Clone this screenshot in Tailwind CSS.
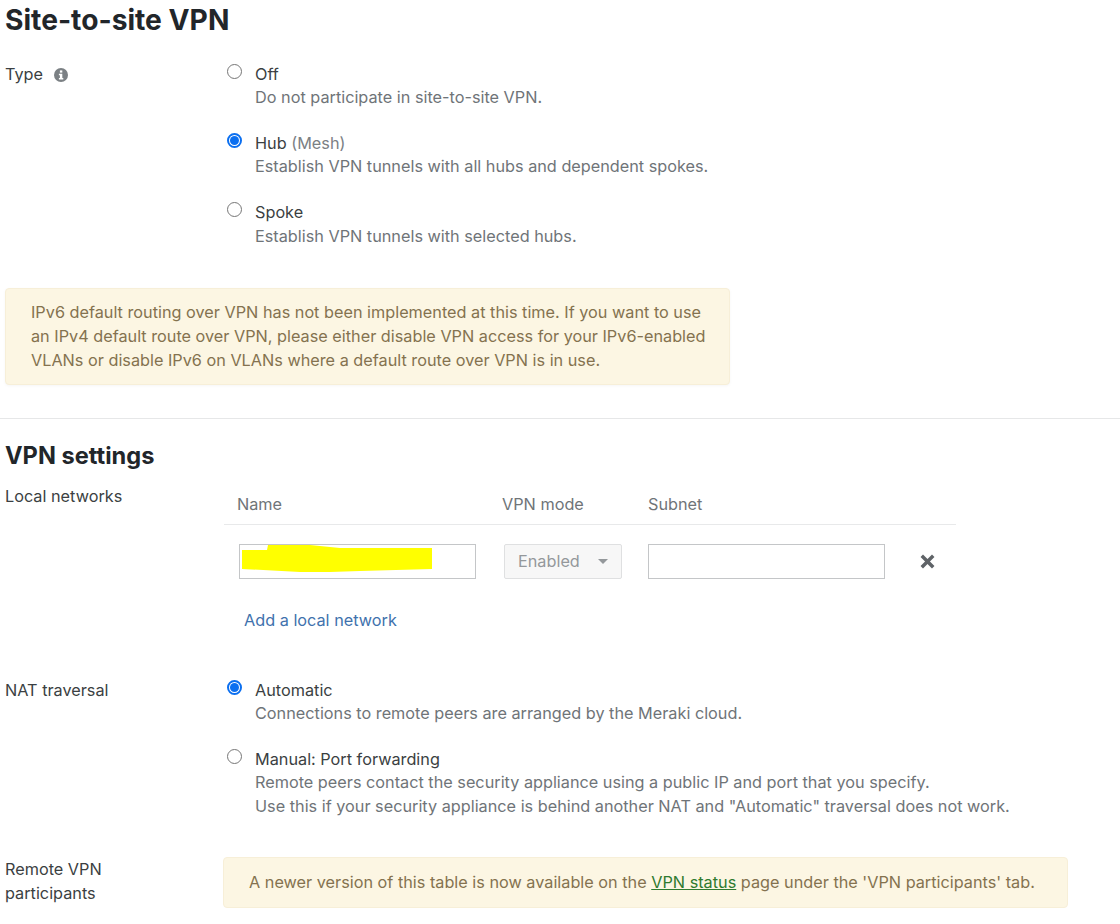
<!DOCTYPE html>
<html lang="en">
  <head>
    <meta charset="UTF-8" />
    <meta name="viewport" content="width=device-width, initial-scale=1.0" />
    <script src="https://cdn.jsdelivr.net/npm/@tailwindcss/browser@4"></script>
    <title>Site-to-site VPN</title>
  </head>

  <body class="bg-white font-['Inter',sans-serif] text-[16.25px] leading-[23px] text-[#3b3f42] overflow-hidden">
    <div class="h-[924px] w-[1120px] overflow-hidden">
      <!-- Type section -->
      <section class="px-[5px] pt-[3px]">
        <h1 class="text-[28.2px] leading-[34px] font-bold text-[#22262a]">Site-to-site VPN</h1>
        <div class="mt-[26px] flex">
          <div class="flex w-[222px] items-center gap-[11px] self-start">
            <span>Type</span>
            <svg class="h-[14px] w-[14px]" viewBox="0 0 14 14"><circle cx="7" cy="7" r="7" fill="#7b8084" /><rect x="5.9" y="2.4" width="2.4" height="2.2" fill="#fff" /><path d="M4.9 5.8h3.4v4.3h1v1.4H4.9v-1.4h1V7.2h-1z" fill="#fff" /></svg>
          </div>
          <div class="flex flex-col gap-[23px]">
            <div class="flex gap-[13px]">
              <span class="mt-[1px] h-[15px] w-[15px] shrink-0 rounded-full border border-[#767676] bg-white"></span>
              <div>
                <div>Off</div>
                <div class="text-[#6f7478]">Do not participate in site-to-site VPN.</div>
              </div>
            </div>
            <div class="flex gap-[13px]">
              <span class="mt-[1px] flex h-[15px] w-[15px] shrink-0 items-center justify-center rounded-full border-2 border-[#0b6ff0] bg-white"><span class="h-[9px] w-[9px] rounded-full bg-[#0b6ff0]"></span></span>
              <div>
                <div>Hub <span class="text-[#7b8084]">(Mesh)</span></div>
                <div class="text-[#6f7478]">Establish VPN tunnels with all hubs and dependent spokes.</div>
              </div>
            </div>
            <div class="flex gap-[13px]">
              <span class="mt-[1px] h-[15px] w-[15px] shrink-0 rounded-full border border-[#767676] bg-white"></span>
              <div>
                <div>Spoke</div>
                <div class="mt-[1px] mb-[-1px] text-[#6f7478]">Establish VPN tunnels with selected hubs.</div>
              </div>
            </div>
          </div>
        </div>
        <div class="mt-[41px] h-[97px] w-[725px] rounded-[4px] border border-[#f7efd8] bg-[#fcf6e3] pt-[11px] pr-[18px] pl-[25px] text-[#84724f] leading-[24px] shadow-[0_1px_3px_rgba(0,0,0,0.04)]">
          IPv6 default routing over VPN has not been implemented at this time. If you want to use an IPv4 default route over VPN, please either disable VPN access for your IPv6-enabled VLANs or disable IPv6 on VLANs where a default route over VPN is in use.
        </div>
      </section>

      <hr class="mt-[33px] border-[#e6e7e8]" />

      <!-- VPN settings section -->
      <section class="px-[5px] pt-[21px]">
        <h2 class="text-[23.6px] leading-[32px] font-bold text-[#22262a]">VPN settings</h2>

        <div class="mt-[13px] flex">
          <div class="w-[219px] shrink-0">Local networks</div>
          <div class="w-[732px]">
            <div class="mt-[8px] flex h-[32px] items-start border-b border-[#e8e9ea] text-[#6f7478]">
              <span class="ml-[13px] w-[265px]">Name</span>
              <span class="w-[146px]">VPN mode</span>
              <span>Subnet</span>
            </div>
            <div class="mt-[19px] flex items-center">
              <div class="relative ml-[15px] h-[35px] w-[237px] border border-[#c4c6c8] bg-white">
                <svg class="absolute top-0 left-0 h-[33px] w-[235px]" viewBox="0 0 235 33"><path d="M2 5 L27 5 L28 0 L70 0 L100 3 L192 3 L192 24 L120 26 L90 27 L60 27 L2 24 Z" fill="#ffff00" /></svg>
              </div>
              <div class="ml-[28px] flex h-[35px] w-[118px] items-center rounded-[2px] border border-[#dfe0e1] bg-[#f7f7f7] pl-[13px] text-[#94989b]">
                Enabled
                <span class="ml-[18px] h-0 w-0 border-x-[5px] border-t-[5px] border-x-transparent border-t-[#94989b]"></span>
              </div>
              <div class="ml-[26px] h-[35px] w-[237px] border border-[#c4c6c8] bg-white"></div>
              <svg class="ml-[35px] h-[15px] w-[15px]" viewBox="0 0 14 14"><path d="M2.8 0.5 7 4.7 11.2 0.5 13.5 2.8 9.3 7 13.5 11.2 11.2 13.5 7 9.3 2.8 13.5 0.5 11.2 4.7 7 0.5 2.8Z" fill="#5f6367" /></svg>
            </div>
            <a class="mt-[30px] ml-[20px] block text-[#3f72ad]">Add a local network</a>
          </div>
        </div>

        <div class="mt-[47px] flex">
          <div class="w-[222px] shrink-0">NAT traversal</div>
          <div class="flex flex-col gap-[23px]">
            <div class="flex gap-[13px]">
              <span class="mt-[1px] flex h-[15px] w-[15px] shrink-0 items-center justify-center rounded-full border-2 border-[#0b6ff0] bg-white"><span class="h-[9px] w-[9px] rounded-full bg-[#0b6ff0]"></span></span>
              <div>
                <div>Automatic</div>
                <div class="text-[#6f7478]">Connections to remote peers are arranged by the Meraki cloud.</div>
              </div>
            </div>
            <div class="flex gap-[13px]">
              <span class="mt-[1px] h-[15px] w-[15px] shrink-0 rounded-full border border-[#767676] bg-white"></span>
              <div>
                <div>Manual: Port forwarding</div>
                <div class="text-[#6f7478]">Remote peers contact the security appliance using a public IP and port that you specify.</div>
                <div class="mt-[1px] mb-[-1px] text-[#6f7478]">Use this if your security appliance is behind another NAT and "Automatic" traversal does not work.</div>
              </div>
            </div>
          </div>
        </div>

        <div class="mt-[40px] flex">
          <div class="w-[218px] shrink-0 leading-[24px]">Remote VPN<br />participants</div>
          <div class="h-[51px] w-[845px] rounded-[4px] border border-[#f7efd8] bg-[#fcf6e3] pl-[25px] pt-[13px] text-[#84724f]">
            A newer version of this table is now available on the <a class="text-[#2f7a2f] underline">VPN status</a> page under the 'VPN participants' tab.
          </div>
        </div>
      </section>
    </div>
  </body>
</html>
